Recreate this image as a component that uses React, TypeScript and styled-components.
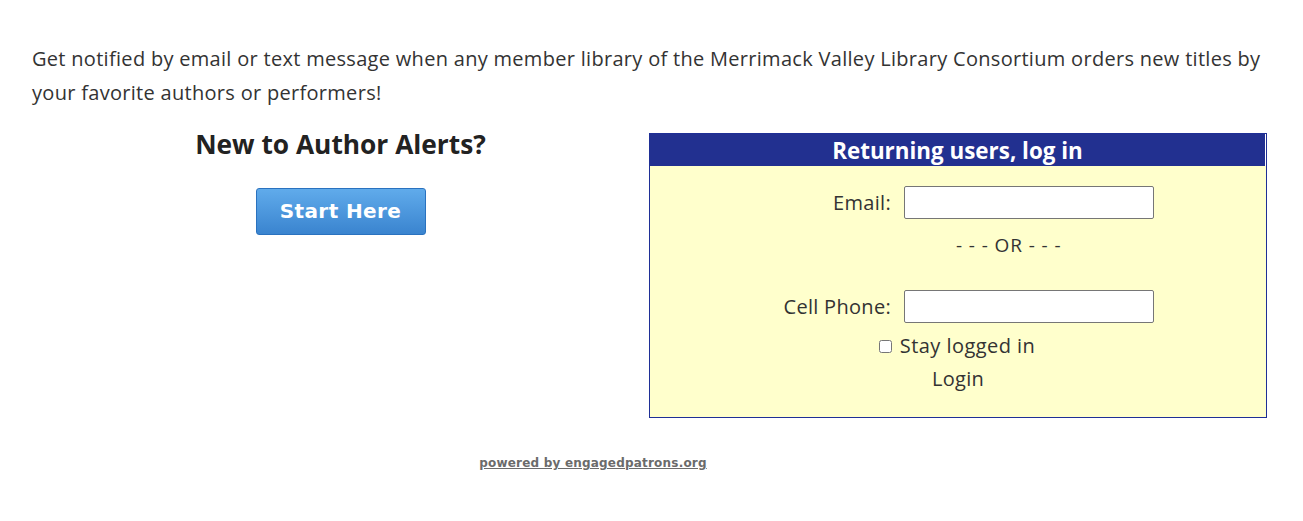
import React from "react";
import styled, { createGlobalStyle } from "styled-components";

const Global = createGlobalStyle`
  html, body { margin: 0; padding: 0; background: #ffffff; }
  body { font-family: "Open Sans", "Liberation Sans", sans-serif; color: #333333; }
`;

const Page = styled.div`
  padding: 42px 32px 40px;
  box-sizing: border-box;
  width: 1303px;
`;

const Intro = styled.p`
  margin: 0;
  font-size: 20px;
  letter-spacing: 0.3px;
  line-height: 34px;
  color: #333333;
`;

const Columns = styled.div`
  display: grid;
  grid-template-columns: 617px 618px;
  margin-top: 23px;
  align-items: start;
`;

const NewUser = styled.div`
  display: flex;
  flex-direction: column;
  align-items: center;
`;

const Heading = styled.h2`
  margin: -2px 0 0;
  font-size: 26.3px;
  line-height: 26px;
  font-weight: 700;
  color: #222222;
`;

const StartButton = styled.a`
  margin-top: 31px;
  display: flex;
  align-items: center;
  justify-content: center;
  width: 170px;
  height: 47px;
  box-sizing: border-box;
  padding-bottom: 2px;
  border: 1px solid #2a72bf;
  border-radius: 3px;
  background: linear-gradient(#60abeb, #3a84cf);
  color: #ffffff;
  font-family: "DejaVu Sans", Verdana, sans-serif;
  font-weight: 700;
  font-size: 20px;
  letter-spacing: 0.4px;
  text-decoration: none;
  cursor: pointer;
`;

const LoginBox = styled.div`
  border: 1px solid #1f2f96;
  background: #ffffff;
  height: 285px;
  box-sizing: border-box;
  display: flex;
  flex-direction: column;
`;

const BoxHeader = styled.div`
  background: #223090;
  color: #ffffff;
  font-weight: 700;
  font-size: 22.4px;
  line-height: 34px;
  height: 32px;
  overflow: hidden;
  text-align: center;
  margin-right: 1px;
`;

const Form = styled.div`
  flex: 1;
  background: #ffffcc;
  display: flex;
  flex-direction: column;
  align-items: center;
  padding-top: 20px;
`;

const FieldGrid = styled.div`
  display: grid;
  grid-template-columns: 110px 250px;
  column-gap: 13px;
  margin-left: 19px;
  align-items: center;
`;

const Label = styled.label`
  justify-self: end;
  font-size: 20px;
  letter-spacing: 0.3px;
  color: #333333;
`;

const Input = styled.input`
  width: 250px;
  height: 33px;
  box-sizing: border-box;
  border: 1px solid #767676;
  border-radius: 2px;
  background: #ffffff;
  padding: 0 4px;
  font-size: 16px;
`;

const OrText = styled.div<{ $after: number }>`
  grid-column: 2;
  padding-left: 52px;
  font-size: 19px;
  letter-spacing: 0.9px;
  line-height: 22px;
  margin-top: 15px;
  margin-bottom: ${(p) => p.$after}px;
  color: #333333;
  white-space: pre;
`;

const StayRow = styled.label`
  display: flex;
  align-items: center;
  gap: 8px;
  margin-top: 12px;
  margin-right: 2px;
  font-size: 20px;
  letter-spacing: 0.45px;
  line-height: 22px;
  color: #333333;
`;

const Check = styled.input`
  margin: 0;
  width: 13px;
  height: 13px;
`;

const LoginLink = styled.a`
  margin-top: 11px;
  font-size: 20px;
  letter-spacing: 0.3px;
  line-height: 22px;
  color: #333333;
  text-decoration: none;
  cursor: pointer;
`;

const Footer = styled.div`
  margin-top: 32px;
  padding-right: 117px;
  text-align: center;
`;

const Powered = styled.a`
  font-family: "DejaVu Sans", Verdana, sans-serif;
  font-size: 12px;
  letter-spacing: 0.2px;
  font-weight: 700;
  color: #6b6b6b;
  text-decoration: underline;
`;

export default function App() {
  return (
    <>
      <Global />
      <Page>
        <Intro>
          Get notified by email or text message when any member library of the
          Merrimack Valley Library Consortium orders new titles by your favorite
          authors or performers!
        </Intro>
        <Columns>
          <NewUser>
            <Heading>New to Author Alerts?</Heading>
            <StartButton>Start Here</StartButton>
          </NewUser>
          <LoginBox>
            <BoxHeader>Returning users, log in</BoxHeader>
            <Form>
              <FieldGrid>
                <Label>Email:</Label>
                <Input type="text" />
                <OrText $after={34}>{"- - - OR - - -"}</OrText>
                <Label>Cell Phone:</Label>
                <Input type="text" />
              </FieldGrid>
              <StayRow>
                <Check type="checkbox" />
                Stay logged in
              </StayRow>
              <LoginLink>Login</LoginLink>
            </Form>
          </LoginBox>
        </Columns>
        <Footer>
          <Powered>powered by engagedpatrons.org</Powered>
        </Footer>
      </Page>
    </>
  );
}
